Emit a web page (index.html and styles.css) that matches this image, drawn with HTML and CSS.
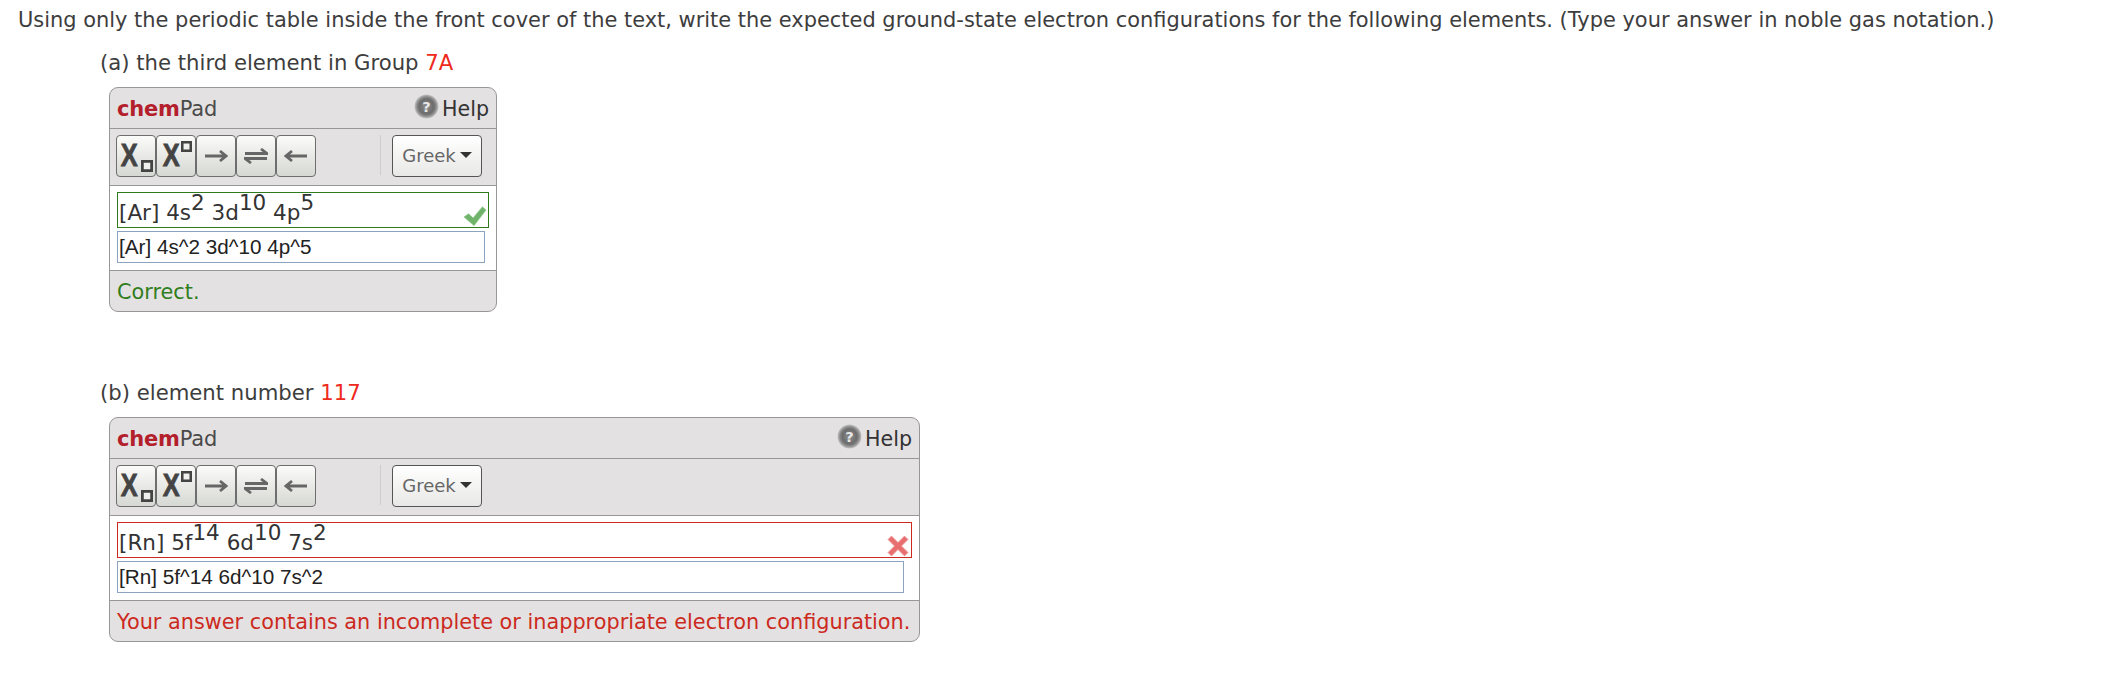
FILE: index.html
```html
<!DOCTYPE html>
<html lang="en">
<head>
<meta charset="utf-8">
<title>chemPad question</title>
<link rel="stylesheet" href="styles.css">
</head>
<body>
<svg class="defs" width="0" height="0" aria-hidden="true">
  <defs>
    <radialGradient id="helpGrad" cx="50%" cy="50%" r="50%">
      <stop offset="0" stop-color="#8e8e8e"/>
      <stop offset="0.62" stop-color="#6c6c6c"/>
      <stop offset="0.8" stop-color="#8a8a8a"/>
      <stop offset="1" stop-color="#c4c4c4"/>
    </radialGradient>
  </defs>
</svg>
<p class="question">Using only the periodic table inside the front cover of the text, write the expected ground-state electron configurations for the following elements. (Type your answer in noble gas notation.)</p>

<section class="part part-a">
  <p class="label">(a) the third element in Group <span class="hl">7A</span></p>
  <div class="pad pad-narrow">
    <div class="pad-head">
      <div class="brand"><b>chem</b>Pad</div>
      <div class="help">
        <svg class="help-icon" viewBox="0 0 24 24"><circle cx="12" cy="12" r="11.500" fill="url(#helpGrad)"/><text x="12" y="17" text-anchor="middle" class="help-q">?</text></svg>
        <span>Help</span>
      </div>
    </div>
    <div class="toolbar">
      <div class="btn-group">
        <button class="tool"><span class="x">X</span><svg class="box box-sub" viewBox="0 0 10 10"><rect x="1" y="1" width="8" height="8"/></svg></button>
        <button class="tool"><span class="x">X</span><svg class="box box-sup" viewBox="0 0 10 10"><rect x="1" y="1" width="8" height="8"/></svg></button>
        <button class="tool"><svg class="arrow" viewBox="0 0 24 14"><path d="M1 7H22M16 2l6 5-6 5"/></svg></button>
        <button class="tool"><svg class="arrow" viewBox="0 0 24 16"><path d="M1 5.5H23L17 1M23 10.500H1L7 15"/></svg></button>
        <button class="tool"><svg class="arrow" viewBox="0 0 24 14"><path d="M23 7H2M8 2L2 7l6 5"/></svg></button>
      </div>
      <div class="divider"></div>
      <button class="greek">Greek<span class="caret"></span></button>
    </div>
    <div class="answers">
      <div class="render ok">[Ar] 4s<sup>2</sup> 3d<sup>10</sup> 4p<sup>5</sup>
        <svg class="mark" viewBox="0 0 26 22"><path d="M1 12l5-3.500 5 4.500L21 1l4 3.500-13 17z" fill="#6fb46a" stroke="#9bcf97" stroke-width="0.800"/></svg>
      </div>
      <div class="entry">[Ar] 4s^2 3d^10 4p^5</div>
    </div>
    <div class="pad-foot good">Correct.</div>
  </div>
</section>

<section class="part part-b">
  <p class="label">(b) element number <span class="hl">117</span></p>
  <div class="pad pad-wide">
    <div class="pad-head">
      <div class="brand"><b>chem</b>Pad</div>
      <div class="help">
        <svg class="help-icon" viewBox="0 0 24 24"><circle cx="12" cy="12" r="11.500" fill="url(#helpGrad)"/><text x="12" y="17" text-anchor="middle" class="help-q">?</text></svg>
        <span>Help</span>
      </div>
    </div>
    <div class="toolbar">
      <div class="btn-group">
        <button class="tool"><span class="x">X</span><svg class="box box-sub" viewBox="0 0 10 10"><rect x="1" y="1" width="8" height="8"/></svg></button>
        <button class="tool"><span class="x">X</span><svg class="box box-sup" viewBox="0 0 10 10"><rect x="1" y="1" width="8" height="8"/></svg></button>
        <button class="tool"><svg class="arrow" viewBox="0 0 24 14"><path d="M1 7H22M16 2l6 5-6 5"/></svg></button>
        <button class="tool"><svg class="arrow" viewBox="0 0 24 16"><path d="M1 5.5H23L17 1M23 10.500H1L7 15"/></svg></button>
        <button class="tool"><svg class="arrow" viewBox="0 0 24 14"><path d="M23 7H2M8 2L2 7l6 5"/></svg></button>
      </div>
      <div class="divider"></div>
      <button class="greek">Greek<span class="caret"></span></button>
    </div>
    <div class="answers">
      <div class="render bad">[Rn] 5f<sup>14</sup> 6d<sup>10</sup> 7s<sup>2</sup>
        <svg class="mark" viewBox="0 0 22 22"><path d="M4.500 1l6.500 6.500L17.500 1 21 4.500 14.500 11l6.500 6.500-3.500 3.500L11 14.500 4.500 21 1 17.500 7.500 11 1 4.500z" fill="#e86f6f" stroke="#f09a9a" stroke-width="0.800"/></svg>
      </div>
      <div class="entry">[Rn] 5f^14 6d^10 7s^2</div>
    </div>
    <div class="pad-foot wrong">Your answer contains an incomplete or inappropriate electron configuration.</div>
  </div>
</section>
</body>
</html>
```

FILE: styles.css
```css
* { box-sizing: border-box; }
html, body { margin: 0; padding: 0; background: #fff; }
body {
  width: 2108px;
  height: 676px;
  overflow: hidden;
  font-family: "DejaVu Sans", Verdana, sans-serif;
  font-size: 21px;
  color: #3d3d3d;
}
.defs { position: absolute; }
p { margin: 0; }
.question { padding: 8px 0 0 18px; line-height: 24px; font-size: 20.93px; white-space: nowrap; }
.part { margin-left: 100px; }
.part-a { margin-top: 19px; }
.part-b { margin-top: 69px; }
.label { line-height: 24px; font-size: 21.2px; }
.hl { color: #ee2a1c; }

.pad {
  margin: 12px 0 0 9px;
  background: #e4e1e2;
  border: 1.5px solid #979797;
  border-radius: 9px;
  overflow: hidden;
}
.pad-narrow { width: 388px; height: 225px; }
.pad-wide { width: 811px; height: 225px; }

.pad-head {
  height: 41px;
  padding: 2px 7px 0;
  display: flex;
  align-items: center;
  justify-content: space-between;
  border-bottom: 1.5px solid #979797;
}
.brand { color: #4a4a4a; letter-spacing: -0.2px; }
.brand b { color: #b3202c; }
.help { display: flex; align-items: center; gap: 3px; color: #333; font-size: 20.600px; }
.help-icon { width: 25px; height: 25px; margin-top: -5px; }
.help-q { font: bold 14px "DejaVu Sans", sans-serif; fill: #e8e8e8; }

.toolbar {
  height: 57px;
  padding: 6px 6px 0;
  display: flex;
  align-items: flex-start;
  border-bottom: 1.5px solid #979797;
}
.btn-group { display: flex; width: 201px; }
.tool {
  position: relative;
  flex: 0 0 40px;
  height: 42px;
  padding: 0;
  border: 1.5px solid #6e6e6e;
  border-radius: 4px;
  background: linear-gradient(#fbfbf9, #d6d8d3);
  display: flex;
  align-items: center;
  justify-content: center;
}
.x {
  display: inline-block;
  font: bold 31px "Liberation Sans", Arial, sans-serif;
  color: #444;
  margin: 0 0 0 -13px;
  transform: scaleX(0.82);
  -webkit-text-stroke: 0.8px #444;
}
.tool:nth-child(2) .x { margin-left: -10px; margin-top: -1px; }
.box { position: absolute; }
.box rect { fill: #f0f1ee; stroke: #444; stroke-width: 2.600; }
.box-sub { width: 12px; height: 12px; right: 2px; bottom: 4px; }
.box-sup { width: 11px; height: 11px; right: 3px; top: 5px; }
.arrow { width: 24px; height: 16px; fill: none; stroke: #666; stroke-width: 2.800; }
.divider { width: 1px; height: 40px; margin-left: 63px; background: #cfcccd; }
.greek {
  width: 90px;
  height: 42px;
  margin-left: 11px;
  padding: 0 0 2px;
  border: 1.5px solid #555;
  border-radius: 4px;
  background: linear-gradient(#fff, #e8e8e6);
  font: 18px "DejaVu Sans", sans-serif;
  color: #666;
  display: flex;
  align-items: center;
  justify-content: center;
  gap: 4px;
}
.caret {
  width: 0;
  height: 0;
  border-left: 6px solid transparent;
  border-right: 6px solid transparent;
  border-top: 6px solid #333;
}

.answers {
  height: 85px;
  padding: 6px 7px 0;
  background: #fff;
  border-bottom: 1.5px solid #979797;
}
.render {
  position: relative;
  height: 36px;
  padding-left: 1px;
  font-size: 21.5px;
  line-height: 39px;
  color: #333;
  white-space: nowrap;
  border: 1.5px solid;
}
.render sup { font-size: 21.5px; line-height: 0; vertical-align: 10.500px; }
.ok { border-color: #2e7a1c; }
.bad { border-color: #cc2a1e; }
.mark { position: absolute; right: 1px; bottom: 0; width: 24px; height: 22px; }
.entry {
  height: 32px;
  margin: 3px 4px 0 0;
  padding-left: 1px;
  border: 1.5px solid #8ba5c0;
  font: 20.7px/29px "Liberation Sans", Arial, sans-serif;
  color: #222;
  white-space: nowrap;
}
.pad-wide .entry { margin-right: 8px; }
.pad-foot { padding: 9px 7px 0; line-height: 24px; font-size: 20.8px; white-space: nowrap; }
.good { color: #2f7d1c; }
.wrong { color: #cc2a1e; }
```
